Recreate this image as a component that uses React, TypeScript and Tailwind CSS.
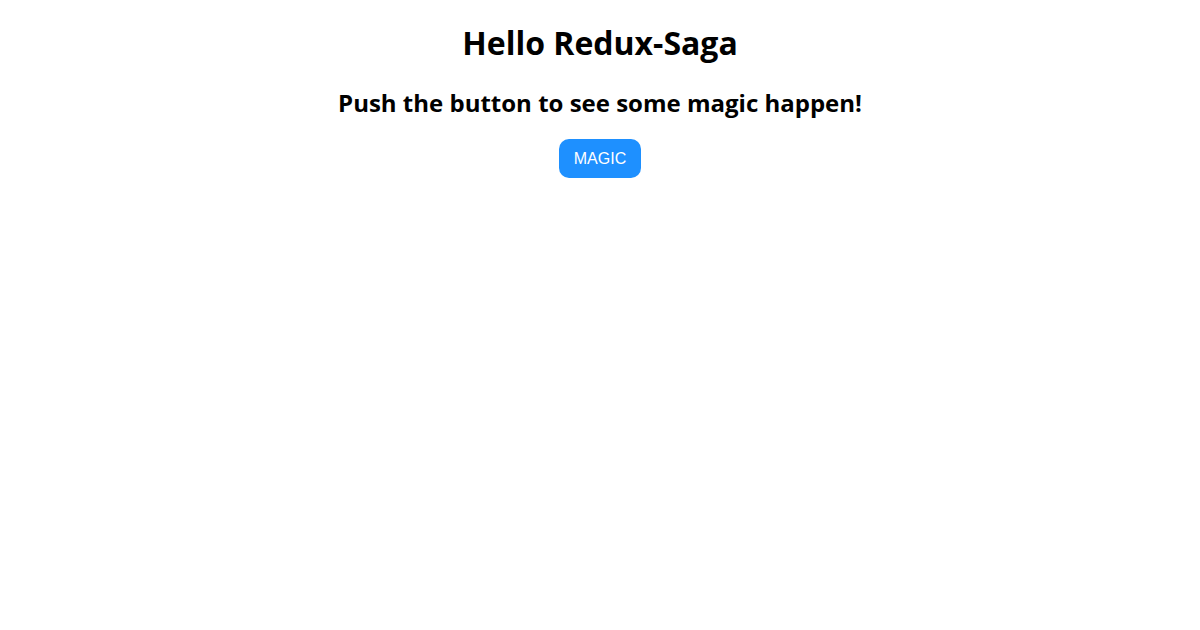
export default function App() {
  return (
    <div className="text-center text-black font-['Open_Sans',sans-serif]">
      <h1 className="text-[32px] font-bold leading-normal pt-[19px]">Hello Redux-Saga</h1>
      <h2 className="text-[24px] font-bold leading-normal mt-[18px]">
        Push the button to see some magic happen!
      </h2>
      <button className="mt-[18px] rounded-[10px] bg-[#1e90ff] px-[15px] py-[10px] text-[16px] leading-[19px] text-white font-['Liberation_Sans',sans-serif]">
        MAGIC
      </button>
    </div>
  )
}
